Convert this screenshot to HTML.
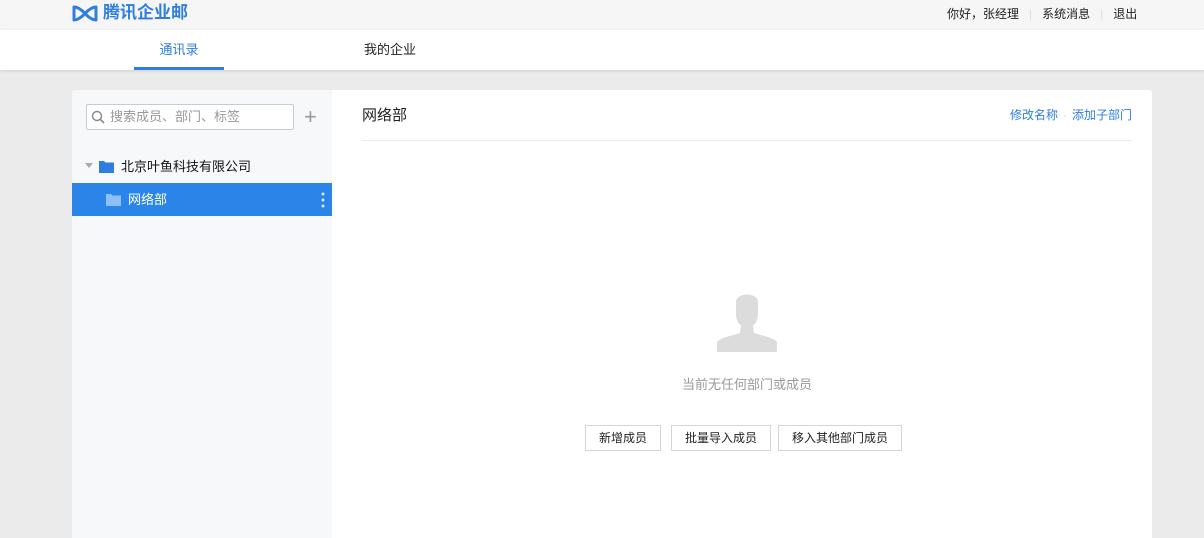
<!DOCTYPE html><html style="width:1204px;height:538px;overflow:hidden"><head><meta charset="utf-8"><style>
*{margin:0;padding:0;box-sizing:border-box}
body{width:1204px;height:538px;overflow:hidden;background:#ebebeb;font-family:"Liberation Sans","Noto Sans CJK SC",sans-serif;font-size:13px;color:#222;position:relative}
.a{position:absolute}
</style></head><body>
<div class="a" style="left:0;top:0;width:1204px;height:30px;background:#f6f6f6"></div>
<svg class="a" style="left:71px;top:4px" width="28" height="19" viewBox="0 0 28 19"><path d="M3 3V16M3 3Q8 3 14 9.5Q20 16 25 16M3 16Q8 16 14 9.5Q20 3 25 3M25 3V16" stroke="#2f7de1" stroke-width="3" fill="none" stroke-linecap="round"/></svg>
<div class="a" style="left:103px;top:3px;font-size:17px;color:#2f7de1;line-height:20px;font-weight:bold">腾讯企业邮</div>
<div class="a" style="left:947px;top:6px;font-size:12px;line-height:16px;color:#222">你好，张经理<span style="color:#ddd;margin:0 10px">|</span>系统消息<span style="color:#ddd;margin:0 10px">|</span>退出</div>
<div class="a" style="left:0;top:30px;width:1204px;height:40px;background:#fff;box-shadow:0 1px 3px rgba(0,0,0,.12)"></div>
<div class="a" style="left:134px;top:41px;width:90px;text-align:center;color:#2f7de1;line-height:18px">通讯录</div>
<div class="a" style="left:134px;top:67px;width:90px;height:3px;background:#2f7de1"></div>
<div class="a" style="left:364px;top:41px;line-height:18px">我的企业</div>
<div class="a" style="left:72px;top:90px;width:1080px;height:448px;background:#fff;border-radius:3px 3px 0 0"></div>
<div class="a" style="left:72px;top:90px;width:260px;height:448px;background:#f7f8fa;border-radius:3px 0 0 0"></div>
<div class="a" style="left:86px;top:104px;width:208px;height:26px;border:1px solid #c8cbd0;background:#fff;border-radius:2px"></div>
<svg class="a" style="left:91px;top:110px" width="14" height="14"><circle cx="6" cy="6" r="4.5" stroke="#888" stroke-width="1.4" fill="none"/><path d="M9.2 9.2L13 13" stroke="#888" stroke-width="1.6"/></svg>
<div class="a" style="left:110px;top:109px;color:#999;line-height:16px">搜索成员、部门、标签</div>
<div class="a" style="left:304px;top:106px;font-size:22px;color:#999;line-height:22px;font-weight:300">+</div>
<div class="a" style="left:85px;top:163px;width:0;height:0;border-left:4px solid transparent;border-right:4px solid transparent;border-top:5px solid #aaa"></div>
<svg class="a" style="left:99px;top:160px" width="15" height="13"><path d="M0 1H5L6.5 2.5H15V13H0Z" fill="#2f7de1"/></svg>
<div class="a" style="left:121px;top:158px;line-height:18px;color:#111">北京叶鱼科技有限公司</div>
<div class="a" style="left:72px;top:183px;width:260px;height:33px;background:#2b85e8"></div>
<svg class="a" style="left:106px;top:193px" width="15" height="13"><path d="M0 1H5L6.5 2.5H15V13H0Z" fill="#8fc0f5"/></svg>
<div class="a" style="left:128px;top:191px;line-height:18px;color:#fff">网络部</div>
<svg class="a" style="left:321px;top:192px" width="4" height="16"><circle cx="2" cy="2" r="1.5" fill="#d8e8fb"/><circle cx="2" cy="8" r="1.5" fill="#d8e8fb"/><circle cx="2" cy="14" r="1.5" fill="#d8e8fb"/></svg>
<div class="a" style="left:362px;top:106px;font-size:15px;line-height:20px;color:#222">网络部</div>
<div class="a" style="left:1010px;top:107px;font-size:12px;line-height:16px;color:#2f7de1">修改名称<span style="color:#ccc;margin:0 5px">·</span>添加子部门</div>
<div class="a" style="left:362px;top:140px;width:770px;height:1px;background:#ececec"></div>
<svg class="a" style="left:716px;top:290px" width="62" height="62" viewBox="0 0 62 62"><path d="M20 12C20 2 42 2 42 12V24C42 32 37 38 31 38C25 38 20 32 20 24Z" fill="#dcdcdc"/><path d="M25 36L37 36L38 43C48 46 58 48 61 52V62H1V52C4 48 14 46 24 43Z" fill="#dcdcdc"/></svg>
<div class="a" style="left:600px;top:376px;width:294px;text-align:center;color:#999;line-height:18px">当前无任何部门或成员</div>
<div class="a" style="left:585px;top:425px;width:76px;height:26px;border:1px solid #d5d5d5;background:#fff;text-align:center;line-height:24px;font-size:12px">新增成员</div>
<div class="a" style="left:671px;top:425px;width:100px;height:26px;border:1px solid #d5d5d5;background:#fff;text-align:center;line-height:24px;font-size:12px">批量导入成员</div>
<div class="a" style="left:778px;top:425px;width:124px;height:26px;border:1px solid #d5d5d5;background:#fff;text-align:center;line-height:24px;font-size:12px">移入其他部门成员</div>
</body></html>
